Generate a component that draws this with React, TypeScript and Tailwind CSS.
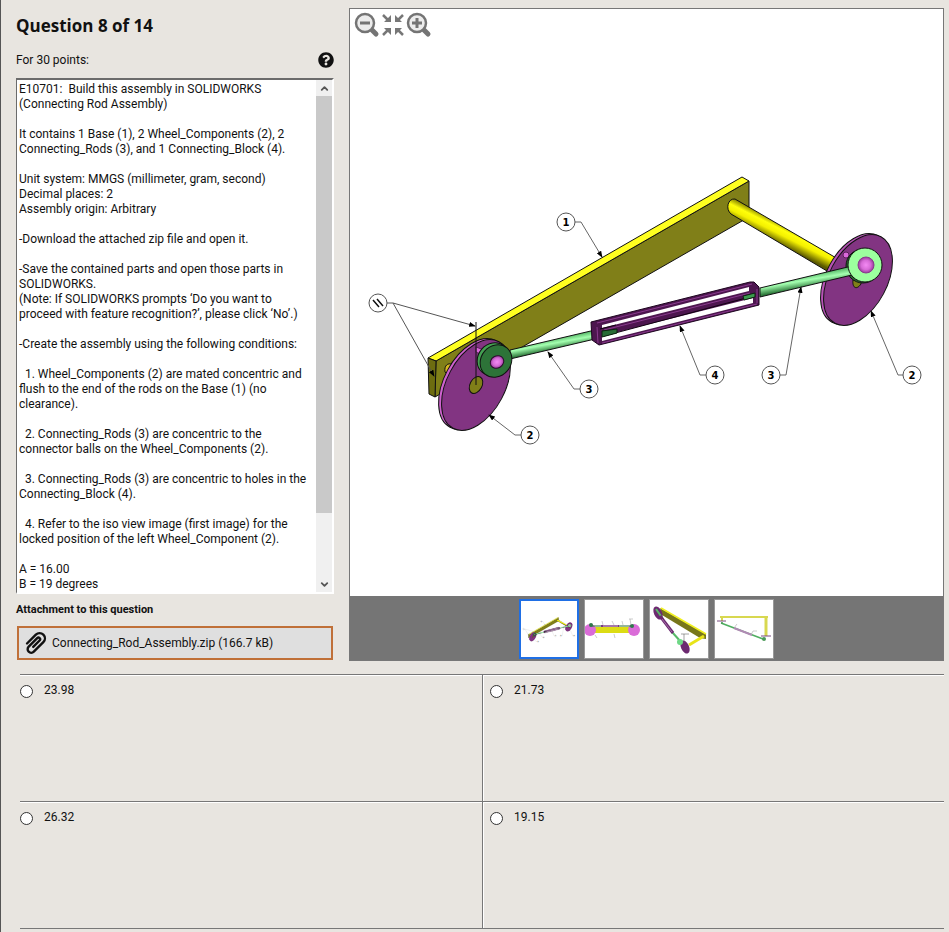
import { useState } from 'react';
import { FaQuestionCircle } from 'react-icons/fa';
import { ChevronDown, ChevronUp } from 'lucide-react';

const instructions = `E10701:  Build this assembly in SOLIDWORKS
(Connecting Rod Assembly)

It contains 1 Base (1), 2 Wheel_Components (2), 2
Connecting_Rods (3), and 1 Connecting_Block (4).

Unit system: MMGS (millimeter, gram, second)
Decimal places: 2
Assembly origin: Arbitrary

-Download the attached zip file and open it.

-Save the contained parts and open those parts in
SOLIDWORKS.
(Note: If SOLIDWORKS prompts ‘Do you want to
proceed with feature recognition?’, please click ‘No’.)

-Create the assembly using the following conditions:

  1. Wheel_Components (2) are mated concentric and
flush to the end of the rods on the Base (1) (no
clearance).

  2. Connecting_Rods (3) are concentric to the
connector balls on the Wheel_Components (2).

  3. Connecting_Rods (3) are concentric to holes in the
Connecting_Block (4).

  4. Refer to the iso view image (first image) for the
locked position of the left Wheel_Component (2).

A = 16.00
B = 19 degrees`;

const answers = [
  ['23.98', '21.73'],
  ['26.32', '19.15'],
];

// balloon centre, then the leader line from the balloon to the arrow tip
const balloons = [
  { label: '1', x: 566, y: 222, line: '575,222 581,222 602,257' },
  { label: '3', x: 589, y: 389, line: '580,389 574,389 548,352' },
  { label: '2', x: 530, y: 435, line: '521,435 515,435 489,415' },
  { label: '4', x: 715, y: 375, line: '706,375 700,375 680,326' },
  { label: '3', x: 771, y: 375, line: '780,375 786,375 801,287' },
  { label: '2', x: 912, y: 375, line: '903,375 898,375 871,311' },
];

function IsoView() {
  return (
    <g strokeLinejoin="round">
      <defs>
        <linearGradient id="pin" gradientUnits="userSpaceOnUse" x1="786" y1="225" x2="777" y2="243">
          <stop offset="0" stopColor="#8a8800" />
          <stop offset="0.3" stopColor="#ffff0a" />
          <stop offset="0.55" stopColor="#f4f000" />
          <stop offset="1" stopColor="#5c5a00" />
        </linearGradient>
        <linearGradient id="rod" gradientUnits="userSpaceOnUse" x1="552" y1="339" x2="554" y2="350">
          <stop offset="0" stopColor="#5fc070" />
          <stop offset="0.4" stopColor="#a4ffb0" />
          <stop offset="1" stopColor="#2f7a3c" />
        </linearGradient>
        <linearGradient id="rodRight" gradientUnits="userSpaceOnUse" x1="802" y1="276" x2="804" y2="288">
          <stop offset="0" stopColor="#5fc070" />
          <stop offset="0.4" stopColor="#a4ffb0" />
          <stop offset="1" stopColor="#2f7a3c" />
        </linearGradient>
        <radialGradient id="ball">
          <stop offset="0" stopColor="#f48af4" />
          <stop offset="0.6" stopColor="#d76bd7" />
          <stop offset="1" stopColor="#963c98" />
        </radialGradient>
        <marker id="tip" viewBox="0 0 8 6" refX="7" refY="3" markerWidth="7" markerHeight="5" orient="auto">
          <path d="M0 0 8 3 0 6z" />
        </marker>
      </defs>

      {/* base */}
      <g stroke="#111" strokeWidth="1">
        <path d="M436 361 749 181V217L435 397z" fill="#807f18" />
        <path d="M428 358 742 177 749 181 436 361z" fill="#ffff20" />
        <path d="M428 358 436 361 435 397 429 394z" fill="#6d6c10" />
        <path d="M735 199C728 198 725 209 731 214L827 271 838 259z" fill="url(#pin)" />
        <path d="M445 372C444 365 448 363 452 364V378z" fill="#d8b820" />
      </g>

      {/* right wheel */}
      <g stroke="#111" strokeWidth="1">
        <ellipse cx="855" cy="279" rx="49" ry="29" transform="rotate(-62 855 279)" fill="#b652b6" />
        <ellipse cx="858" cy="280" rx="49" ry="29" transform="rotate(-62 858 280)" fill="#823482" />
        <path d="M853 280C852 287 856 291 861 284V278z" fill="#807f18" />
        <circle cx="846" cy="255" r="3" fill="#db68db" stroke="#5c205c" />
        <circle cx="863" cy="266" r="17" fill="#28712f" />
        <path d="M852 266 760 288V297L852 275z" fill="url(#rodRight)" />
        <circle cx="865" cy="265" r="17" fill="#9cff9e" />
      </g>
      <circle cx="866" cy="265" r="8" fill="url(#ball)" stroke="#8a3a8e" />

      {/* left wheel */}
      <g stroke="#111" strokeWidth="1">
        <ellipse cx="473" cy="384" rx="49" ry="29" transform="rotate(-62 473 384)" fill="#cf62cf" />
        <ellipse cx="476" cy="385" rx="49" ry="29" transform="rotate(-62 476 385)" fill="#823482" />
        <ellipse cx="476" cy="385" rx="9" ry="6" transform="rotate(-62 476 385)" fill="#807f18" />
        <path d="M476 347 484 350V356L476 352z" fill="#db68db" stroke="#5c205c" />
        <ellipse cx="493" cy="359" rx="17" ry="15" transform="rotate(-50 493 359)" fill="#43a052" />
        <path d="M510 350 595 330V339L510 359z" fill="url(#rod)" />
        <ellipse cx="496" cy="361" rx="17" ry="15" transform="rotate(-50 496 361)" fill="#2d7338" />
      </g>
      <ellipse cx="497" cy="362" rx="7" ry="6" transform="rotate(-30 497 362)" fill="url(#ball)" stroke="#2c0c2e" />

      {/* connecting block: solid outline with the two slots cut out of it */}
      <path d="M591 322 750 282 754 282 759 287V305L599 345 592 340z" fill="#4d164f" stroke="#1c041e" />
      <path d="M602 325 749 287V291L602 328z" fill="#fff" />
      <path d="M602 336 618 332 753 298V303L602 341z" fill="#fff" />
      <g fill="none" stroke="#8a3a8e" strokeWidth="1">
        <path d="M597 323 752 284M604 330 750 293M602 343 757 304M597 327 598 343M757 289V303" />
      </g>
      <path d="M600 329 616 325M604 336 750 297" stroke="#100210" />
      <path d="M602 331 617 329V333L602 337z" fill="#286b36" stroke="#0d2210" />
      <path d="M743 296 755 293V297L744 300z" fill="#3c9a4e" stroke="#0d2210" />

      {/* parallel mate leaders */}
      <g fill="none" stroke="#555">
        <path d="M387 303H393L475 326" markerEnd="url(#tip)" />
        <path d="M393 303 434 376" markerEnd="url(#tip)" />
        <path d="M476 322V385" stroke="#111" />
        <circle cx="378" cy="303" r="9" fill="#fff" />
        <path d="M373 300 379 307M377 299 383 306" stroke="#111" strokeWidth="1.5" />
      </g>

      {balloons.map(b => (
        <g key={b.line}>
          <polyline points={b.line} fill="none" stroke="#666" markerEnd="url(#tip)" />
          <circle cx={b.x} cy={b.y} r="9" fill="#fff" stroke="#555" />
          <text x={b.x} y={b.y + 4} textAnchor="middle" fontSize="10" fontWeight="700" fontFamily="'DejaVu Sans', sans-serif">
            {b.label}
          </text>
        </g>
      ))}
    </g>
  );
}

function FrontThumb() {
  return (
    <svg viewBox="0 0 58 58" className="h-full w-full">
      <path d="M5 27H50V33H5z" fill="#dcdc14" />
      <circle cx="5" cy="30" r="6" fill="#da6cd8" />
      <circle cx="49" cy="30" r="6" fill="#da6cd8" />
      <path d="M5 26H48" stroke="#286b36" strokeWidth="1" />
      <path d="M16 26H34" stroke="#7a3a80" strokeWidth="2" />
      <path d="M18 26H33" stroke="#e8d8ea" strokeWidth="0.8" />
      <circle cx="6" cy="25" r="2" fill="#2f7a4a" />
      <circle cx="47" cy="26" r="2" fill="#2f7a4a" />
      <path d="M17 21 18 25M27 21 29 25M37 21 38 25M45 19 46 25M12 38 10 35M30 38 29 34M44 19H48" stroke="#aaa" strokeWidth="0.6" />
    </svg>
  );
}

function BackThumb() {
  return (
    <svg viewBox="0 0 58 58" className="h-full w-full">
      <path d="M10 8 56 34V39L50 38 12 15z" fill="#77761a" />
      <path d="M11 8 56 34" stroke="#f0f020" strokeWidth="1.5" />
      <path d="M54 36 39 45" stroke="#e8e418" strokeWidth="3" />
      <ellipse cx="8" cy="13" rx="4" ry="7" transform="rotate(-25 8 13)" fill="#6c2a70" />
      <path d="M6 9 13 19M22 32 31 42" stroke="#58b868" strokeWidth="2" />
      <path d="M10 16 23 33" stroke="#6c2a70" strokeWidth="3" />
      <path d="M12 19 22 32" stroke="#c79acb" strokeWidth="0.6" />
      <ellipse cx="35" cy="47" rx="4" ry="7" transform="rotate(-25 35 47)" fill="#6c2a70" />
      <circle cx="30" cy="42" r="3" fill="#6ed886" />
      <path d="M31 34H39M34 34V43" stroke="#666" strokeWidth="0.6" />
    </svg>
  );
}

function TopThumb() {
  return (
    <svg viewBox="0 0 58 58" className="h-full w-full" fill="none">
      <path d="M5 17H53" stroke="#d8d850" strokeWidth="2" />
      <path d="M51 17V36" stroke="#d8d850" strokeWidth="3" />
      <path d="M7 17V21" stroke="#d8d850" strokeWidth="2" />
      <path d="M2 21H11M46 36H56" stroke="#7a4a80" strokeWidth="1" />
      <path d="M6 23 48 39" stroke="#4fae60" strokeWidth="1.5" />
      <path d="M19 28 37 35" stroke="#b08ab4" strokeWidth="2" />
      <circle cx="49" cy="39" r="2" fill="#4a9a58" />
      <circle cx="7" cy="23" r="1" fill="#4a9a58" />
      <path d="M22 24 19 28M38 31 36 35M38 31H42" stroke="#aaa" strokeWidth="0.6" />
    </svg>
  );
}

function IsoThumb() {
  return (
    <svg viewBox="350 9 593 586" className="h-full w-full">
      <IsoView />
    </svg>
  );
}

function ZoomIcon({ plus }: { plus?: boolean }) {
  return (
    <svg width="26" height="26" viewBox="0 0 26 26" fill="none" stroke="#747474">
      <path d="M18 18 22 22" strokeWidth="5" strokeLinecap="round" />
      <circle cx="11" cy="11" r="9" strokeWidth="2.5" fill="#ececec" />
      <path d="M6 11H16" strokeWidth="3" />
      {plus && <path d="M11 6V16" strokeWidth="3" />}
    </svg>
  );
}

function FitIcon() {
  return (
    <svg width="22" height="26" viewBox="0 0 22 26" fill="#777" stroke="#777" strokeWidth="2.5">
      <path d="M1 3 6 8M21 3 16 8M1 23 6 18M21 23 16 18" />
      <path d="M9 3V10H2zM13 3V10H20zM9 23V16H2zM13 23V16H20z" stroke="none" />
    </svg>
  );
}

function ClipIcon() {
  return (
    <svg width="26" height="26" viewBox="0 0 26 26" fill="none" stroke="#111" strokeWidth="2.4" strokeLinecap="round">
      <path
        d="M9 14.5H18a1.7 1.7 0 0 0 0-3.4H6a3.6 3.6 0 0 0 0 7.2H19.5a5.3 5.3 0 0 0 0-10.6H7"
        transform="rotate(-45 13 13)"
      />
    </svg>
  );
}

const views = [
  { name: 'Iso view', Thumb: IsoThumb },
  { name: 'Front view', Thumb: FrontThumb },
  { name: 'Back view', Thumb: BackThumb },
  { name: 'Top view', Thumb: TopThumb },
];

export default function App() {
  const [view, setView] = useState(0);
  const [answer, setAnswer] = useState('');
  const CurrentThumb = views[view].Thumb;

  return (
    <main className="flex min-h-screen flex-col border-l border-[#555] bg-[#e8e5e0] pt-2 pr-[5px] pb-1 text-xs text-[#111] font-[Roboto,'Open_Sans',sans-serif]">
      <div className="flex gap-[15px] pl-[15px]">
        <section className="flex w-[318px] shrink-0 flex-col">
          <h1 className="pt-1 text-[17px] leading-7 font-bold font-['Open_Sans',sans-serif]">Question 8 of 14</h1>
          <div className="flex items-center justify-between pt-3 pb-[10px]">
            <p>For 30 points:</p>
            <button type="button" aria-label="Help">
              <FaQuestionCircle size={16} />
            </button>
          </div>

          <div className="flex flex-1 border-t-2 border-r-2 border-b-2 border-l border-t-[#6b6b6b] border-r-white border-b-white border-l-[#6b6b6b] bg-white">
            <div className="flex-1 pt-0.5 pl-0.5 leading-[15px] whitespace-pre">{instructions}</div>
            <div className="flex w-4 flex-col bg-[#f0f0f0]">
              <button type="button" aria-label="Scroll up" className="flex h-4 items-center justify-center">
                <ChevronUp size={11} strokeWidth={4} color="#555" />
              </button>
              <div className="h-[417px] bg-[#c9c9c9]" />
              <button type="button" aria-label="Scroll down" className="mt-auto flex h-4 items-center justify-center">
                <ChevronDown size={11} strokeWidth={4} color="#555" />
              </button>
            </div>
          </div>

          <h2 className="py-2 text-[11px] leading-4 font-bold">Attachment to this question</h2>
          <button type="button" className="mx-px mb-px flex h-[34px] items-center gap-1 border-2 border-[#c07038] bg-[#dfdfdf] pl-[3px]">
            <ClipIcon />
            Connecting_Rod_Assembly.zip (166.7 kB)
          </button>
        </section>

        <section className="flex min-w-0 flex-1 flex-col border border-[#777] bg-white">
          <div className="relative flex-1">
            {view === 0 ? (
              <svg viewBox="350 9 593 586" className="block w-full">
                <IsoView />
              </svg>
            ) : (
              <CurrentThumb />
            )}
            <div className="absolute top-[3px] left-1 flex gap-0.5">
              <button type="button" aria-label="Zoom out"><ZoomIcon /></button>
              <button type="button" aria-label="Fit to window"><FitIcon /></button>
              <button type="button" aria-label="Zoom in"><ZoomIcon plus /></button>
            </div>
          </div>
          <div className="flex justify-center gap-[5px] bg-[#757575] pt-[3px] pb-px">
            {views.map(({ name, Thumb }, i) => (
              <button
                key={name}
                type="button"
                aria-label={name}
                onClick={() => setView(i)}
                className={
                  i === view
                    ? 'size-[60px] border-2 border-[#1f6fe5] bg-white'
                    : 'size-[60px] border border-[#999] bg-white'
                }
              >
                <Thumb />
              </button>
            ))}
          </div>
        </section>
      </div>

      <fieldset aria-label="Answers" className="mt-[13px] ml-[19px] flex flex-1 flex-col border-b border-[#777]">
        {answers.map(row => (
          <div key={row[0]} className="grid min-h-[127px] flex-1 grid-cols-2 border-t border-[#777] shadow-[inset_0_1px_0_#fff]">
            {row.map((value, i) => (
              <label key={value} className={i === 0 ? 'flex items-start gap-[11px] pt-[7px]' : 'flex items-start gap-[11px] border-l border-[#777] pt-[7px] pl-[7px] shadow-[inset_1px_0_0_#fff]'}>
                <input
                  type="radio"
                  name="answer"
                  value={value}
                  checked={answer === value}
                  onChange={() => setAnswer(value)}
                  className="mt-[3px] size-[13px] appearance-none rounded-full border border-[#333] bg-white checked:border-4"
                />
                {value}
              </label>
            ))}
          </div>
        ))}
      </fieldset>
    </main>
  );
}
